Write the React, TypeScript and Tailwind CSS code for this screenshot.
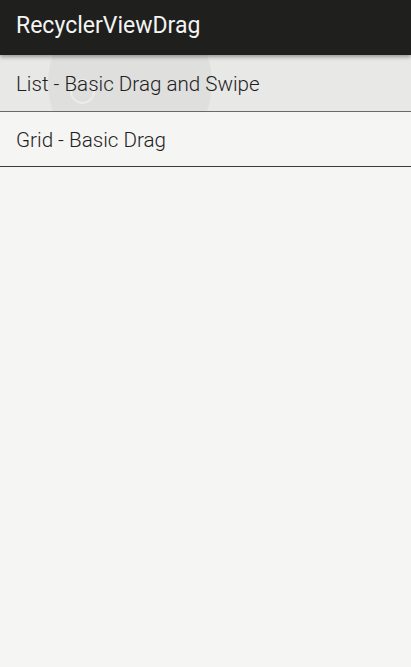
import React from 'react'

const rows = ['List - Basic Drag and Swipe', 'Grid - Basic Drag']

const App = () => {
	return (
		<div className="flex min-h-[667px] flex-col bg-[#f5f5f3] font-['Roboto',sans-serif]">
			{/* Toolbar */}
			<header className="relative z-10 flex h-[55px] items-center bg-[#1f1f1e] px-4 pb-[4px] shadow-[0_2px_4px_rgba(0,0,0,0.35)]">
				<h1 className="text-[23px] leading-none text-[#f4f4f4]">RecyclerViewDrag</h1>
			</header>

			{/* List */}
			<main className="flex flex-col">
				{rows.map((label, i) => (
					<div
						key={label}
						className={
							i === 0
								? 'relative flex h-[57px] items-center overflow-hidden border-b border-[#6a6a6a] bg-[#e8e8e7] px-4 pt-[2px]'
								: 'relative flex h-[55px] items-center overflow-hidden border-b border-[#3a3a3a] px-4 pt-[2px]'
						}
					>
						{i === 0 && (
							<>
								{/* ripple */}
								<span className="absolute left-[48px] top-[-54px] h-[164px] w-[164px] rounded-full bg-[#000]/[0.035]"></span>
								{/* touch indicator */}
								<span className="absolute left-[70px] top-[24px] h-[25px] w-[25px] rounded-full border-2 border-white/40"></span>
							</>
						)}
						<span className="relative text-[20.6px] font-light leading-none text-[#1e1e1e]">{label}</span>
					</div>
				))}
			</main>
		</div>
	)
}

export default App
